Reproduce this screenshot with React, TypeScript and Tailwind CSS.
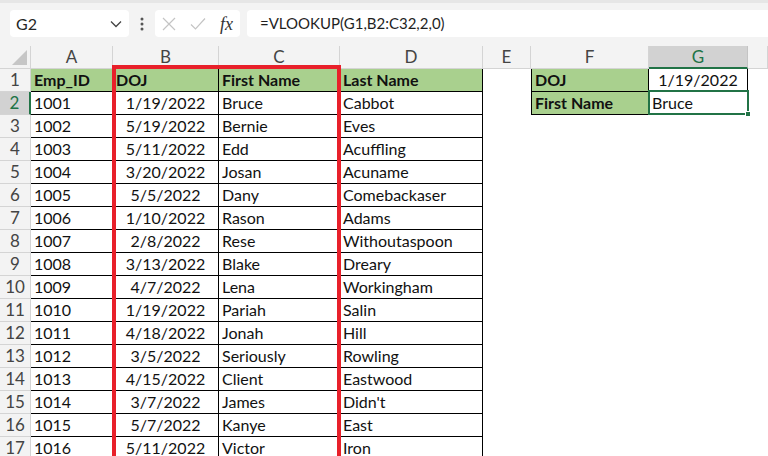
const cols = ["A", "B", "C", "D", "E", "F", "G", ""];

type Row = [string, string, string, string, string, string];

const rows: Row[] = [
  ["Emp_ID", "DOJ", "First Name", "Last Name", "DOJ", "1/19/2022"],
  ["1001", "1/19/2022", "Bruce", "Cabbot", "First Name", "Bruce"],
  ["1002", "5/19/2022", "Bernie", "Eves", "", ""],
  ["1003", "5/11/2022", "Edd", "Acuffling", "", ""],
  ["1004", "3/20/2022", "Josan", "Acuname", "", ""],
  ["1005", "5/5/2022", "Dany", "Comebackaser", "", ""],
  ["1006", "1/10/2022", "Rason", "Adams", "", ""],
  ["1007", "2/8/2022", "Rese", "Withoutaspoon", "", ""],
  ["1008", "3/13/2022", "Blake", "Dreary", "", ""],
  ["1009", "4/7/2022", "Lena", "Workingham", "", ""],
  ["1010", "1/19/2022", "Pariah", "Salin", "", ""],
  ["1011", "4/18/2022", "Jonah", "Hill", "", ""],
  ["1012", "3/5/2022", "Seriously", "Rowling", "", ""],
  ["1013", "4/15/2022", "Client", "Eastwood", "", ""],
  ["1014", "3/7/2022", "James", "Didn't", "", ""],
  ["1015", "5/7/2022", "Kanye", "East", "", ""],
  ["1016", "5/11/2022", "Victor", "Iron", "", ""],
];

function FormulaBar() {
  return (
    <div className="h-[46px] bg-[#f3f3f3] border-t-[3px] border-[#e6e6e6] flex items-start pt-[7px] pl-[10px]">
      {/* Name box */}
      <div className="w-[119px] h-[27px] bg-white rounded-[4px] flex items-center justify-between pl-[6px] pr-[7px]">
        <span className="text-[16px] text-[#262626]">G2</span>
        <svg width="12" height="8" viewBox="0 0 12 8">
          <polyline points="1,1.5 6,6.5 11,1.5" fill="none" stroke="#444" strokeWidth="1.3" />
        </svg>
      </div>
      <div className="w-[26px] h-[27px] flex items-center justify-center">
        <svg width="4" height="14" viewBox="0 0 4 14">
          <circle cx="2" cy="2" r="1.5" fill="#555" />
          <circle cx="2" cy="7" r="1.5" fill="#555" />
          <circle cx="2" cy="12" r="1.5" fill="#555" />
        </svg>
      </div>
      <div className="w-[85px] h-[27px] bg-white rounded-[4px] flex items-center pl-[7px] gap-[14px]">
        <svg width="14" height="14" viewBox="0 0 14 14">
          <path d="M1 1 L13 13 M13 1 L1 13" stroke="#c4c4c4" strokeWidth="1.2" fill="none" />
        </svg>
        <svg width="16" height="14" viewBox="0 0 16 14">
          <path d="M1 7.5 L5.5 12 L15 1.5" stroke="#c4c4c4" strokeWidth="1.2" fill="none" />
        </svg>
        <span className="text-[18px] italic text-[#333] leading-none" style={{ fontFamily: '"Liberation Serif", "DejaVu Serif", serif' }}>
          fx
        </span>
      </div>
      <div className="ml-[7px] flex-1 h-[27px] bg-white rounded-l-[4px] flex items-center pl-[13px]">
        <span className="text-[15px] text-[#1f1f1f]">=VLOOKUP(G1,B2:C32,2,0)</span>
      </div>
    </div>
  );
}

function cellClass(r: number, c: number) {
  // c: 0=A .. 3=D, 4=F, 5=G
  const green = (c <= 3 && r === 0) || (c === 4 && r <= 1);
  let cls = "h-[23px] px-[3px] flex items-center whitespace-nowrap overflow-hidden text-[16px] text-[#111]";
  if (c <= 3) cls += " border-r border-b border-black";
  if (c >= 4 && r <= 1) cls += " border-r border-b border-black";
  if (c === 4 && r <= 1) cls += " border-l";
  if (green) cls += " bg-[#a9d08e] font-bold";
  if ((c === 1 && r > 0) || (c === 5 && r === 0)) cls += " justify-center";
  return cls;
}

function Sheet() {
  return (
    <div className="grid grid-cols-[31px_82px_106px_121px_143px_48px_118px_99px_1fr]">
      {/* corner */}
      <div className="h-[23px] bg-[#f3f3f3] border-r border-b border-[#d4d4d4] relative">
        <svg className="absolute right-[3px] bottom-[3px]" width="15" height="15" viewBox="0 0 15 15">
          <polygon points="15,0 15,15 0,15" fill="#c6c6c6" />
        </svg>
      </div>
      {cols.map((l, i) =>
        l === "G" ? (
          <div key={i} className="h-[23px] bg-[#d2d2d2] border-r border-[#c4c4c4] border-b-2 border-b-[#217346] flex items-center justify-center text-[17px] text-[#217346]">
            {l}
          </div>
        ) : (
          <div key={i} className="h-[23px] bg-[#f3f3f3] border-r border-b border-[#d4d4d4] flex items-center justify-center text-[17px] text-[#444]">
            {l}
          </div>
        )
      )}
      {rows.map((row, r) => {
        const cells = [row[0], row[1], row[2], row[3], "", row[4], row[5], ""];
        return [
          r === 1 ? (
            <div key={`h${r}`} className="h-[23px] bg-[#d2d2d2] border-r-2 border-r-[#217346] border-b border-b-[#d4d4d4] flex items-center justify-center text-[17px] text-[#217346]">
              {r + 1}
            </div>
          ) : (
            <div key={`h${r}`} className="h-[23px] bg-[#f3f3f3] border-r border-b border-[#d4d4d4] flex items-center justify-center text-[17px] text-[#444]">
              {r + 1}
            </div>
          ),
          ...cells.map((v, i) => {
            if (i === 4 || i === 7) return <div key={`${r}-${i}`} className="h-[23px]" />;
            const c = i > 4 ? i - 1 : i;
            return (
              <div key={`${r}-${i}`} className={cellClass(r, c)}>
                {v}
              </div>
            );
          }),
        ];
      })}
    </div>
  );
}

export default function App() {
  return (
    <div className="w-[768px] h-[456px] overflow-hidden bg-white relative" style={{ fontFamily: 'Lato, "Open Sans", sans-serif' }}>
      <FormulaBar />
      <Sheet />
      {/* red highlight around B:C */}
      <div className="absolute left-[112px] top-[65px] w-[229px] h-[420px] border-4 border-[#e8202a] pointer-events-none" />
      {/* active cell G2 */}
      <div className="absolute left-[648px] top-[90px] w-[101px] h-[25px] border-2 border-[#217346] pointer-events-none">
        <div className="absolute right-[-4px] bottom-[-4px] w-[6px] h-[6px] bg-[#217346] border border-white" />
      </div>
    </div>
  );
}
